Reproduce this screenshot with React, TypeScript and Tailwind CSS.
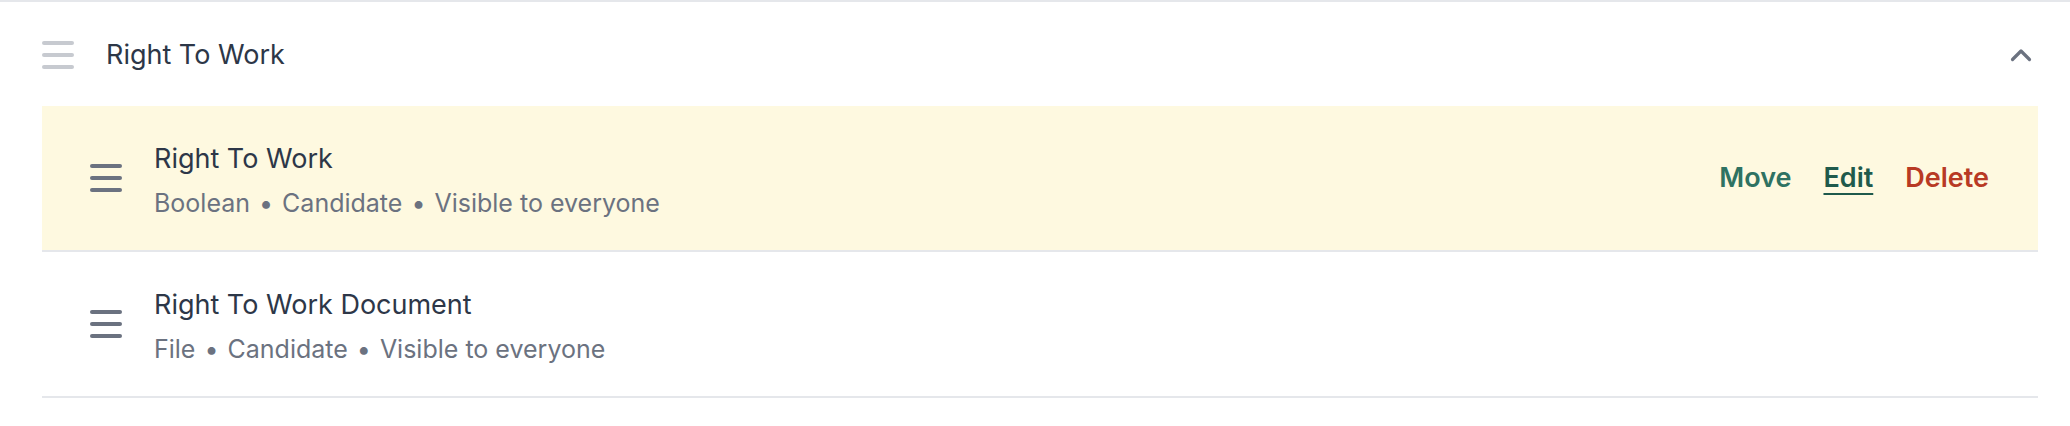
import React from "react";

function DragIcon({ light }: { light?: boolean }) {
  const c = light ? "bg-[#c7cad0]" : "bg-[#6b7280]";
  return (
    <div className="flex flex-col justify-between w-[32px] h-[28px] shrink-0">
      <span className={`block h-[4px] rounded-full ${c}`} />
      <span className={`block h-[4px] rounded-full ${c}`} />
      <span className={`block h-[4px] rounded-full ${c}`} />
    </div>
  );
}

function Row({ title, meta, active }: { title: string; meta: string[]; active?: boolean }) {
  return (
    <div
      className={`flex items-center h-[146px] pl-[48px] pr-[49px] border-b-2 border-[#e5e7eb] ${
        active ? "bg-[#fef9e0]" : "bg-white"
      }`}
    >
      <DragIcon />
      <div className="ml-[32px] pt-[4px] flex flex-col">
        <div className="text-[27px] leading-[34px] text-[#2d3748]">{title}</div>
        <div className="mt-[11px] text-[25px] leading-[32px] text-[#6b7280]">
          {meta.map((m, i) => (
            <React.Fragment key={m}>
              {i > 0 && <span className="mx-[9px]">•</span>}
              {m}
            </React.Fragment>
          ))}
        </div>
      </div>
      {active && (
        <div className="ml-auto flex items-center gap-[32px] text-[27px] font-semibold">
          <button className="text-[#2e7262]">Move</button>
          <button className="text-[#1f5a4c] underline decoration-2 underline-offset-[6px]">Edit</button>
          <button className="text-[#b83a24]">Delete</button>
        </div>
      )}
    </div>
  );
}

export default function App() {
  return (
    <div
      className="w-full h-[426px] bg-white border-t-2 border-[#e5e7eb]"
      style={{ fontFamily: "Inter, 'Noto Sans', sans-serif" }}
    >
      <div className="pl-[42px] pr-[32px]">
        <div className="flex items-center h-[104px] pt-[2px]">
          <DragIcon light />
          <div className="ml-[32px] text-[27px] text-[#2d3748]">Right To Work</div>
          <svg
            className="ml-auto mr-[6px]"
            width="22"
            height="14"
            viewBox="0 0 22 14"
            fill="none"
            stroke="#6b7280"
            strokeWidth="3.2"
            strokeLinecap="round"
            strokeLinejoin="round"
          >
            <path d="M2.5 11.5 L11 3 L19.5 11.5" />
          </svg>
        </div>
        <Row title="Right To Work" meta={["Boolean", "Candidate", "Visible to everyone"]} active />
        <Row title="Right To Work Document" meta={["File", "Candidate", "Visible to everyone"]} />
      </div>
    </div>
  );
}
